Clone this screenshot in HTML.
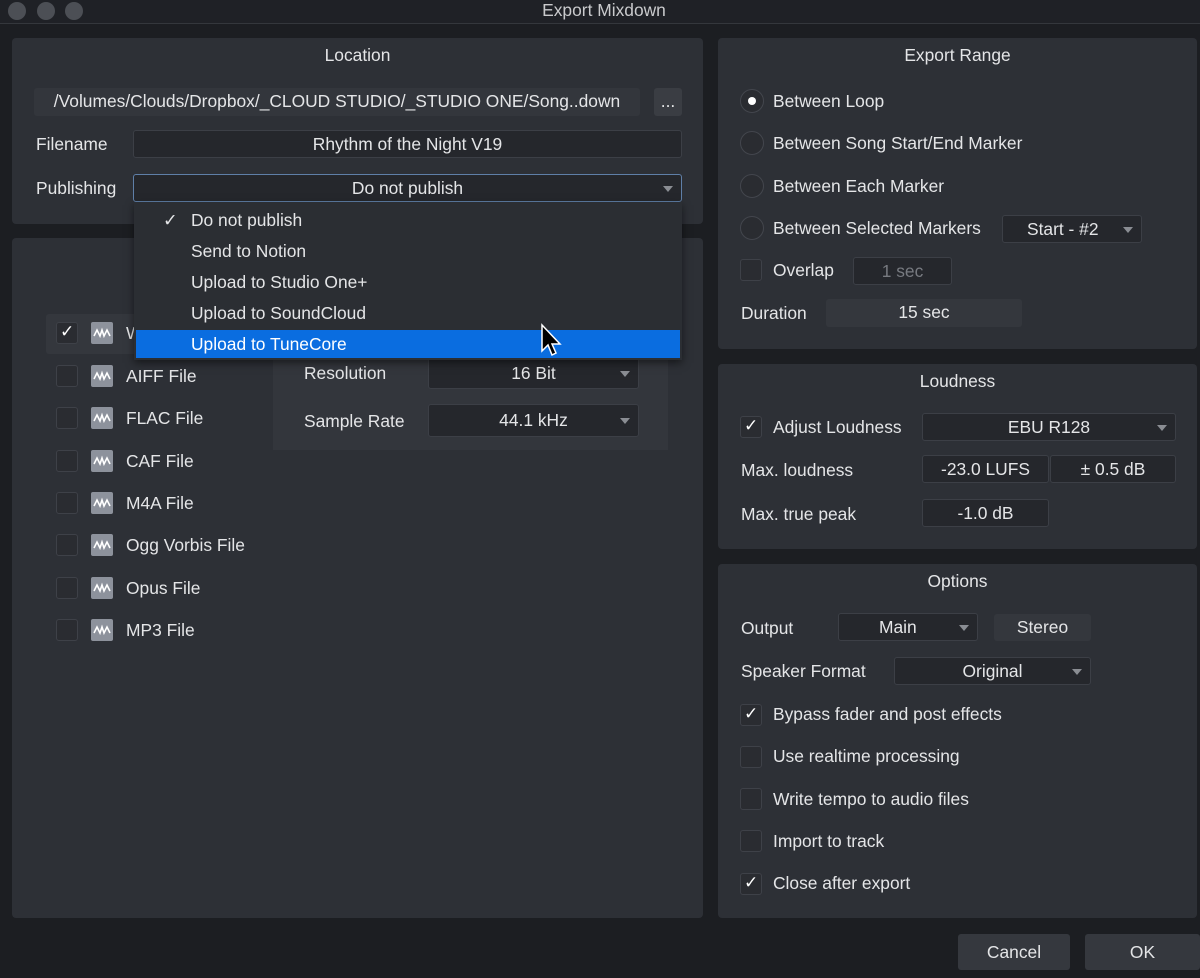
<!DOCTYPE html>
<html><head><style>
*{margin:0;padding:0;box-sizing:border-box}
body{width:1200px;height:978px;background:#1c1e22;font-family:"Liberation Sans",sans-serif;font-size:17.4px;color:#e4e5e7;position:relative;overflow:hidden}
.a{position:absolute}
.p{position:absolute;background:#2d3036;border-radius:4px}
.t{position:absolute;line-height:20px;white-space:nowrap}
.f{position:absolute;background:#25272c;border:1px solid #3c3f46;border-radius:3px;text-align:center;line-height:26px}
.fd{position:absolute;background:#34373d;border-radius:3px;text-align:center;line-height:26px}
.arr{position:absolute;right:8px;top:11px;width:0;height:0;border-left:5px solid transparent;border-right:5px solid transparent;border-top:6px solid #8a8d93}
.cb{position:absolute;width:22px;height:22px;border:1px solid #3e4148;border-radius:3px;background:#2a2c31}
.rd{position:absolute;width:24px;height:24px;border:1px solid #43464d;border-radius:50%;background:#2a2c31}
.ck{position:absolute;left:3px;top:-1px;font-size:17px;color:#fff;font-family:"DejaVu Sans",sans-serif}
.ic{position:absolute;width:22px;height:22px;background:#8d929c;border-radius:2px}
.c{text-align:center}
</style></head><body>
<div class="a" style="left:0;top:0;width:1200px;height:24px;background:#1f2126;border-bottom:1px solid #34373c"></div>
<div class="a" style="left:8px;top:2px;width:18px;height:18px;border-radius:50%;background:#4c4f55"></div>
<div class="a" style="left:37px;top:2px;width:18px;height:18px;border-radius:50%;background:#4c4f55"></div>
<div class="a" style="left:65px;top:2px;width:18px;height:18px;border-radius:50%;background:#4c4f55"></div>
<div class="t" style="left:0;width:1208px;top:0;text-align:center;color:#c9cacc">Export Mixdown</div>

<div class="p" style="left:12px;top:38px;width:691px;height:186px"></div>
<div class="t c" style="left:12px;width:691px;top:45px">Location</div>
<div class="fd" style="left:34px;top:88px;width:606px;height:28px;background:#33363c">/Volumes/Clouds/Dropbox/_CLOUD STUDIO/_STUDIO ONE/Song..down</div>
<div class="fd" style="left:654px;top:88px;width:28px;height:28px;background:#3a3d43">...</div>
<div class="t" style="left:36px;top:134px">Filename</div>
<div class="f" style="left:133px;top:130px;width:549px;height:28px">Rhythm of the Night V19</div>
<div class="t" style="left:36px;top:178px">Publishing</div>
<div class="f" style="left:133px;top:174px;width:549px;height:28px;border-color:#5f7fa8">Do not publish<div class="arr"></div></div>

<div class="p" style="left:12px;top:238px;width:691px;height:680px"></div>
<div class="a" style="left:46px;top:314px;width:230px;height:40px;background:#34373d;border-radius:3px"></div>
<div class="a" style="left:273px;top:300px;width:395px;height:150px;background:#33363c"></div>
<div class="t" style="left:304px;top:363px">Resolution</div>
<div class="f" style="left:428px;top:357px;width:211px;height:32px;line-height:30px">16 Bit<div class="arr" style="top:13px"></div></div>
<div class="t" style="left:304px;top:411px">Sample Rate</div>
<div class="f" style="left:428px;top:404px;width:211px;height:33px;line-height:31px">44.1 kHz<div class="arr" style="top:13px"></div></div>

<svg width="0" height="0" style="position:absolute"><defs><symbol id="w" viewBox="0 0 22 22"><path d="M3 14 L6 8 L9 14 L11 8 L13 14 L16 8 L19 14" fill="none" stroke="#fff" stroke-width="1.6"/></symbol></defs></svg>
<div class="cb" style="left:56px;top:322px"><span class="ck">✓</span></div><svg class="ic" style="left:91px;top:322px"><use href="#w"/></svg><div class="t" style="left:126px;top:323px">WAV File</div>
<div class="cb" style="left:56px;top:365px"></div><svg class="ic" style="left:91px;top:365px"><use href="#w"/></svg><div class="t" style="left:126px;top:366px">AIFF File</div>
<div class="cb" style="left:56px;top:407px"></div><svg class="ic" style="left:91px;top:407px"><use href="#w"/></svg><div class="t" style="left:126px;top:408px">FLAC File</div>
<div class="cb" style="left:56px;top:450px"></div><svg class="ic" style="left:91px;top:450px"><use href="#w"/></svg><div class="t" style="left:126px;top:451px">CAF File</div>
<div class="cb" style="left:56px;top:492px"></div><svg class="ic" style="left:91px;top:492px"><use href="#w"/></svg><div class="t" style="left:126px;top:493px">M4A File</div>
<div class="cb" style="left:56px;top:534px"></div><svg class="ic" style="left:91px;top:534px"><use href="#w"/></svg><div class="t" style="left:126px;top:535px">Ogg Vorbis File</div>
<div class="cb" style="left:56px;top:577px"></div><svg class="ic" style="left:91px;top:577px"><use href="#w"/></svg><div class="t" style="left:126px;top:578px">Opus File</div>
<div class="cb" style="left:56px;top:619px"></div><svg class="ic" style="left:91px;top:619px"><use href="#w"/></svg><div class="t" style="left:126px;top:620px">MP3 File</div>

<div class="a" style="left:134px;top:202px;width:548px;height:158px;background:#2b2e33;box-shadow:0 3px 8px rgba(0,0,0,.5)"></div>
<div class="a" style="left:136px;top:330px;width:544px;height:28px;background:#0a6de0"></div>
<div class="t" style="left:163px;top:210px">✓</div>
<div class="t" style="left:191px;top:210px">Do not publish</div>
<div class="t" style="left:191px;top:241px">Send to Notion</div>
<div class="t" style="left:191px;top:272px">Upload to Studio One+</div>
<div class="t" style="left:191px;top:303px">Upload to SoundCloud</div>
<div class="t" style="left:191px;top:334px;color:#fff">Upload to TuneCore</div>
<svg class="a" style="left:540px;top:323px" width="22" height="36" viewBox="0 0 22 36"><path d="M2 2 L2 28 L8 22 L12 32 L16 30 L12 21 L20 21 Z" fill="#000" stroke="#fff" stroke-width="1.5"/></svg>

<div class="p" style="left:718px;top:38px;width:479px;height:311px"></div>
<div class="t c" style="left:718px;width:479px;top:45px">Export Range</div>
<div class="rd" style="left:740px;top:89px"><div class="a" style="left:7px;top:7px;width:8px;height:8px;border-radius:50%;background:#fff"></div></div>
<div class="t" style="left:773px;top:91px">Between Loop</div>
<div class="rd" style="left:740px;top:131px"></div><div class="t" style="left:773px;top:133px">Between Song Start/End Marker</div>
<div class="rd" style="left:740px;top:174px"></div><div class="t" style="left:773px;top:176px">Between Each Marker</div>
<div class="rd" style="left:740px;top:216px"></div><div class="t" style="left:773px;top:218px">Between Selected Markers</div>
<div class="f" style="left:1002px;top:215px;width:140px;height:28px;text-align:left;padding-left:24px">Start - #2<div class="arr"></div></div>
<div class="cb" style="left:740px;top:259px"></div><div class="t" style="left:773px;top:260px">Overlap</div>
<div class="f" style="left:853px;top:257px;width:99px;height:28px;color:#777a80">1 sec</div>
<div class="t" style="left:741px;top:303px">Duration</div>
<div class="fd" style="left:826px;top:299px;width:196px;height:28px">15 sec</div>

<div class="p" style="left:718px;top:364px;width:479px;height:185px"></div>
<div class="t c" style="left:718px;width:479px;top:371px">Loudness</div>
<div class="cb" style="left:740px;top:416px"><span class="ck">✓</span></div><div class="t" style="left:773px;top:417px">Adjust Loudness</div>
<div class="f" style="left:922px;top:413px;width:254px;height:28px">EBU R128<div class="arr"></div></div>
<div class="t" style="left:741px;top:460px">Max. loudness</div>
<div class="f" style="left:922px;top:455px;width:127px;height:28px">-23.0 LUFS</div>
<div class="f" style="left:1050px;top:455px;width:126px;height:28px">± 0.5 dB</div>
<div class="t" style="left:741px;top:504px">Max. true peak</div>
<div class="f" style="left:922px;top:499px;width:127px;height:28px">-1.0 dB</div>

<div class="p" style="left:718px;top:564px;width:479px;height:354px"></div>
<div class="t c" style="left:718px;width:479px;top:571px">Options</div>
<div class="t" style="left:741px;top:618px">Output</div>
<div class="f" style="left:838px;top:613px;width:140px;height:28px;text-align:left;padding-left:40px">Main<div class="arr"></div></div>
<div class="fd" style="left:994px;top:614px;width:97px;height:27px">Stereo</div>
<div class="t" style="left:741px;top:661px">Speaker Format</div>
<div class="f" style="left:894px;top:657px;width:197px;height:28px">Original<div class="arr"></div></div>
<div class="cb" style="left:740px;top:704px"><span class="ck">✓</span></div><div class="t" style="left:773px;top:704px">Bypass fader and post effects</div>
<div class="cb" style="left:740px;top:746px"></div><div class="t" style="left:773px;top:746px">Use realtime processing</div>
<div class="cb" style="left:740px;top:788px"></div><div class="t" style="left:773px;top:789px">Write tempo to audio files</div>
<div class="cb" style="left:740px;top:830px"></div><div class="t" style="left:773px;top:831px">Import to track</div>
<div class="cb" style="left:740px;top:873px"><span class="ck">✓</span></div><div class="t" style="left:773px;top:873px">Close after export</div>

<div class="fd" style="left:958px;top:934px;width:112px;height:36px;line-height:36px;background:#35383e">Cancel</div>
<div class="fd" style="left:1085px;top:934px;width:115px;height:36px;line-height:36px;background:#35383e">OK</div>
</body></html>
